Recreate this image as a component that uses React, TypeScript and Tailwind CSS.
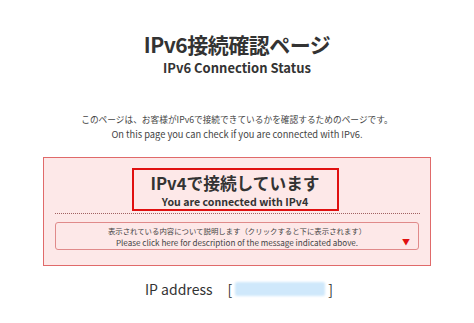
import React from "react";

export default function App() {
  const jp = { fontFamily: '"Noto Sans CJK JP", "Noto Sans", sans-serif' };
  return (
    <div className="w-[474px] h-[323px] bg-white text-[#333] overflow-hidden" style={jp}>
      <div className="flex flex-col items-center pt-[30px]">
        <h1 className="text-[21px] leading-[28px] font-bold tracking-[-0.5px]">IPv6接続確認ページ</h1>
        <div className="text-[13px] leading-[18px] font-bold mt-[1px]">IPv6 Connection Status</div>
        <p className="mt-[35px] text-[8.7px] leading-[15px] text-[#444]">このページは、お客様がIPv6で接続できているかを確認するためのページです。</p>
        <p className="text-[9.3px] leading-[15px] text-[#444]">On this page you can check if you are connected with IPv6.</p>
        <div className="mt-[15px] w-[388px] h-[109px] border border-[#e06a6a] bg-[#fde8e8] flex flex-col items-center">
          <div className="mt-[10px] ml-[-4px] w-[207px] h-[43px] border-2 border-[#e01010] flex flex-col items-center justify-center">
            <div className="text-[16.7px] leading-[24px] font-bold">IPv4で接続しています</div>
            <div className="text-[10.6px] leading-[15px] font-bold mt-[-1px]">You are connected with IPv4</div>
          </div>
          <div className="mt-[2px] w-[365px] border-t border-dotted border-[#a06060]" />
          <div className="mt-[8px] w-[364px] h-[28px] border border-[#e08a8a] rounded-[3px] relative flex flex-col items-center justify-center gap-[1px]">
            <div className="text-[7.4px] leading-[11px] text-[#444]">表示されている内容について説明します（クリックすると下に表示されます）</div>
            <div className="text-[8.1px] leading-[11px] text-[#444]">Please click here for description of the message indicated above.</div>
            <span className="absolute right-[8px] top-[15px] text-[#e01010] text-[8px] leading-[8px]">▼</span>
          </div>
        </div>
        <div className="mt-[14px] flex items-center text-[14px] leading-[18px] text-[#333] pl-[4px]">
          <span>IP address</span>
          <span className="ml-[15px]">[</span>
          <span className="ml-[3px] w-[90px] h-[14px] bg-[#cfe8fb] rounded-[2px] blur-[1px]" />
          <span className="ml-[3px]">]</span>
        </div>
      </div>
    </div>
  );
}
